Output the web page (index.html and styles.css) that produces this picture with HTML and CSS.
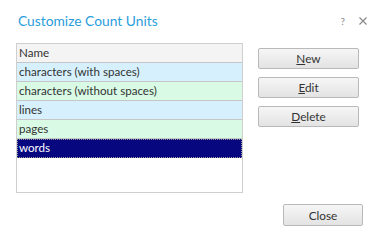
FILE: index.html
```html
<!DOCTYPE html>
<html lang="en">
<head>
  <meta charset="UTF-8">
  <title>Customize Count Units</title>
  <link rel="stylesheet" href="styles.css">
</head>
<body>
  <div class="dialog">
    <div class="title-bar">
      <span class="title">Customize Count Units</span>
      <span class="title-icons">
        <span class="help">?</span>
        <svg class="close-x" width="8" height="8" viewBox="0 0 8 8">
          <path d="M0.5 0.5 L7.5 7.5 M7.5 0.5 L0.5 7.5" stroke="#8a8a8a" stroke-width="1.2"/>
        </svg>
      </span>
    </div>

    <div class="content">
      <div class="list-box">
        <div class="row header">Name</div>
        <div class="row blue">characters (with spaces)</div>
        <div class="row green">characters (without spaces)</div>
        <div class="row blue">lines</div>
        <div class="row green">pages</div>
        <div class="row selected">words</div>
      </div>

      <div class="buttons">
        <button class="btn"><u>N</u>ew</button>
        <button class="btn"><u>E</u>dit</button>
        <button class="btn"><u>D</u>elete</button>
      </div>
    </div>

    <div class="footer">
      <button class="btn close-btn">Close</button>
    </div>
  </div>
</body>
</html>
```

FILE: styles.css
```css
body {
  margin: 0;
  background: #ffffff;
  font-family: Lato, "Open Sans", sans-serif;
  color: #333333;
}

.dialog {
  width: 380px;
  height: 244px;
}

.title-bar {
  display: flex;
  justify-content: space-between;
  align-items: center;
  height: 43px;
  padding: 0 13px 0 18px;
  box-sizing: border-box;
}

.title {
  font-size: 13.8px;
  color: #2a9ddb;
  margin-top: -2px;
}

.title-icons {
  display: flex;
  align-items: center;
  gap: 14px;
  margin-top: -1px;
}

.help {
  font-size: 10px;
  color: #8a8a8a;
}

.content {
  display: flex;
  padding-left: 16px;
}

.list-box {
  width: 227px;
  height: 150px;
  box-sizing: border-box;
  border: 1px solid #cfcfcf;
}

.row {
  height: 19px;
  box-sizing: border-box;
  border-bottom: 1px solid #c6c6c6;
  font-size: 11.6px;
  line-height: 18px;
  padding-left: 2px;
  white-space: nowrap;
}

.row.header {
  background: #f4f4f4;
}

.row.blue {
  background: #d6f1fd;
}

.row.green {
  background: #d9fbe5;
}

.row.selected {
  background: #07077f;
  color: #ffffff;
  border: 1px dotted #9a9a9a;
  line-height: 16px;
  padding-left: 1px;
}

.buttons {
  display: flex;
  flex-direction: column;
  gap: 8px;
  margin-left: 15px;
  margin-top: 5px;
}

.btn {
  width: 101px;
  height: 21px;
  padding: 0;
  border: 1px solid #b9b9b9;
  border-radius: 2px;
  background: linear-gradient(#f6f6f6, #e3e3e3);
  font-family: Lato, "Open Sans", sans-serif;
  font-size: 11.8px;
  color: #333333;
}

.btn u {
  text-decoration-thickness: 1px;
  text-underline-offset: 1px;
}

.footer {
  display: flex;
  justify-content: flex-end;
  padding: 11px 17px 0 0;
}

.close-btn {
  width: 80px;
  height: 22px;
}
```
